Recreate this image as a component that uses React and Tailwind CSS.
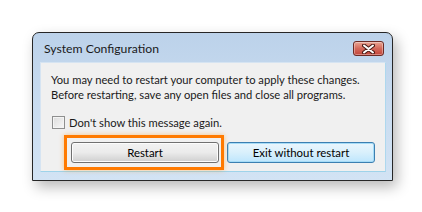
import React from 'react';

const CloseButton = () => (
  <div className="w-[31px] h-[15px] mt-[2px] rounded-[3px] border border-[#6d2a24] bg-gradient-to-b from-[#e8a493] via-[#d4685a] to-[#c2453a] flex items-center justify-center shadow-[inset_0_0_0_1px_rgba(255,255,255,0.35)]">
    <svg width="13" height="10" viewBox="0 0 13 10">
      <path d="M2 1.5 L11 8.5 M11 1.5 L2 8.5" stroke="#4a1a14" strokeWidth="4" strokeLinecap="round" />
      <path d="M2 1.5 L11 8.5 M11 1.5 L2 8.5" stroke="#ffffff" strokeWidth="2" strokeLinecap="round" />
    </svg>
  </div>
);

const Button = ({ children, focused }) => (
  <div
    className={`w-[148px] h-[21px] rounded-[3px] border flex items-center justify-center text-[11.4px] text-black ${
      focused
        ? 'border-[#3c7fb1] bg-gradient-to-b from-[#eaf6fd] via-[#d9f0fc] to-[#bee6fd] shadow-[inset_0_0_0_1px_#a6dcf7]'
        : 'border-[#707070] bg-gradient-to-b from-[#f2f2f2] via-[#ebebeb] to-[#cfcfcf] shadow-[inset_0_0_0_1px_#fcfcfc]'
    }`}
  >
    {children}
  </div>
);

export default function App() {
  return (
    <div
      className="w-[422px] h-[212px] bg-white pt-[32px] pl-[32px]"
      style={{ fontFamily: 'Lato, "Noto Sans", sans-serif' }}
    >
      <div className="w-[361px] h-[149px] border border-[#262626] rounded-t-[7px] bg-gradient-to-b from-[#bcd2ea] via-[#c9dcf0] to-[#d2e3f4] shadow-[4px_6px_14px_rgba(0,0,0,0.28)] flex flex-col">
        <div className="h-[29px] flex items-center justify-between pl-[11px] pr-[8px]">
          <span className="text-[12.2px] mt-[4px] text-[#1a1a1a] whitespace-nowrap">System Configuration</span>
          <CloseButton />
        </div>
        <div className="mx-[7px] mr-[6px] h-[110px] bg-[#f0f0f0] border border-[#d6e4f2] border-b-[#9ed3ea] border-r-[#aed8ee] pl-[10px] pt-[9px] text-[11.2px] text-[#1a1a1a] leading-[15px] flex flex-col">
          <p className="whitespace-nowrap">You may need to restart your computer to apply these changes.</p>
          <p className="whitespace-nowrap">Before restarting, save any open files and close all programs.</p>
          <div className="flex items-center gap-[4px] mt-[13px] pl-[1px]">
            <div className="w-[13px] h-[13px] border border-[#8e8f8f] bg-gradient-to-br from-[#dcdcdc] to-[#f8f8f8] shadow-[inset_0_0_0_1px_#f4f4f4]" />
            <span className="whitespace-nowrap">Don't show this message again.</span>
          </div>
          <div className="flex gap-[8px] mt-[12px] pl-[20px]">
            <div className="relative">
              <Button>Restart</Button>
              <div className="absolute left-[-7px] right-[-5px] top-[-7px] bottom-[-7px] border-[3px] border-[#ff7a00] shadow-[0_0_5px_rgba(255,140,0,0.45)]" />
            </div>
            <Button focused>Exit without restart</Button>
          </div>
        </div>
      </div>
    </div>
  );
}
